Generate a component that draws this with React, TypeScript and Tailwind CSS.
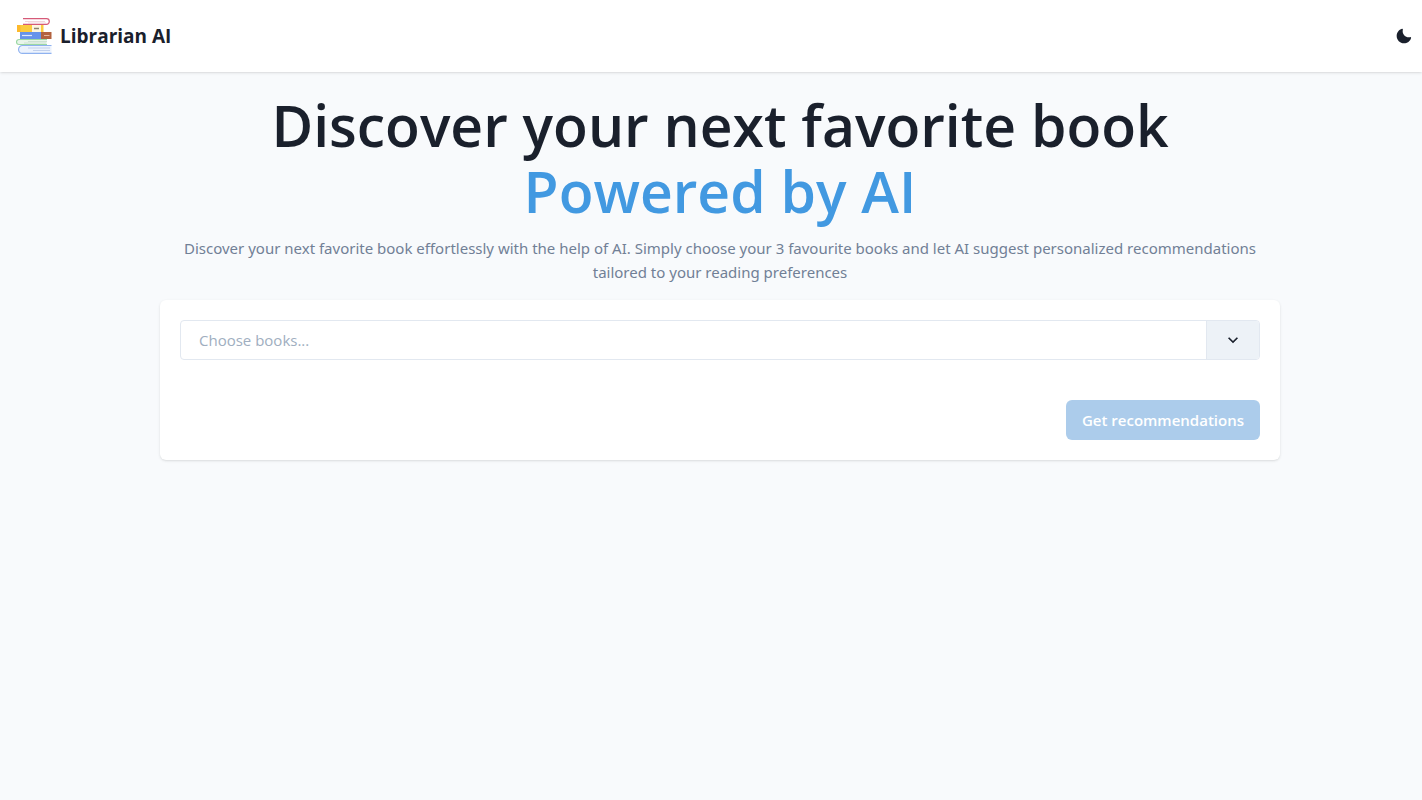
const BooksLogo = () => {
  return (
    <svg viewBox="0 0 36 36" className="w-9 h-9" fill="none" aria-hidden="true">
      <path d="M7 .7h23.500a2.800 2.800 0 0 1 0 5.600H7" fill="#fff" stroke="#d65a78" strokeWidth="1.200" />
      <path d="M9 3.500h20M12 5h18" stroke="#ecc3cc" strokeWidth=".7" />
      <path d="M1 7h26v7H1z" fill="#fbcb3f" />
      <path d="M1 7h3.500v7H1z" fill="#fdb92c" />
      <path d="M16 7h10v7H16z" fill="#fdf6df" />
      <path d="M25 7h2.500v7H25z" fill="#fbcb3f" />
      <path d="M18 10.500h5" stroke="#8b8270" strokeWidth="1.500" />
      <path d="M4 14h22v7H4z" fill="#6593ea" />
      <path d="M25 14h10.500v7H25z" fill="#b2623f" />
      <path d="M6 17.500h10" stroke="#dce8ff" strokeWidth="1.200" />
      <path d="M28 17.500h5.500" stroke="#e6b49c" strokeWidth="1" />
      <path d="M31 21.500H3a2.500 2.500 0 0 0 0 5h28" fill="#e9f5ea" stroke="#9bd8a4" strokeWidth="1.200" />
      <path d="M12 23.500h19M8 25h22" stroke="#c5dccb" strokeWidth=".8" />
      <path d="M35.500 27.500H6.500a3.900 3.900 0 0 0 0 7.900h29" fill="#edf3fd" stroke="#8fb2f0" strokeWidth="1.200" />
      <path d="M12 30h22M17 32.500h17" stroke="#b6c8e8" strokeWidth=".8" />
    </svg>
  );
};

const MoonIcon = () => {
  return (
    <svg viewBox="0 0 24 24" className="w-4 h-4" fill="currentColor" aria-hidden="true">
      <path d="M21.4,13.7C20.6,13.9,19.8,14,19,14c-5,0-9-4-9-9c0-0.8,0.1-1.6,0.3-2.4c0.1-0.3,0-0.7-0.3-1c-0.3-0.3-0.6-0.4-1-0.3C4.3,2.7,1,7.1,1,12c0,6.1,4.9,11,11,11c4.9,0,9.3-3.3,10.6-8.1c0.1-0.3,0-0.7-0.3-1C22.1,13.7,21.7,13.6,21.4,13.7z" />
    </svg>
  );
};

const ChevronIcon = () => {
  return (
    <svg viewBox="0 0 24 24" className="w-5 h-5" fill="currentColor" aria-hidden="true">
      <path d="M16.59 8.59L12 13.17 7.41 8.59 6 10l6 6 6-6z" />
    </svg>
  );
};

const Header = () => {
  return (
    <header className="flex items-center justify-between h-18 pl-4 pr-[10px] bg-white shadow-sm">
      <a href="#" className="flex items-center gap-2 text-[19px] font-bold">
        <BooksLogo />
        Librarian AI
      </a>
      <button type="button" aria-label="Toggle dark mode">
        <MoonIcon />
      </button>
    </header>
  );
};

const BookForm = () => {
  return (
    <form className="flex flex-col gap-10 p-5 bg-white rounded-md shadow-sm">
      <div className="flex h-10 border border-[#e2e8f0] rounded-sm overflow-hidden">
        <input
          type="text"
          aria-label="Choose books"
          placeholder="Choose books..."
          className="flex-1 min-w-0 pl-[18px] text-[15px] placeholder:text-[#a0aec0] outline-none"
        />
        <button
          type="button"
          aria-label="Show books"
          className="flex items-center justify-center w-[53px] bg-[#edf2f7] border-l border-[#e2e8f0]"
        >
          <ChevronIcon />
        </button>
      </div>
      <button
        type="submit"
        disabled
        className="self-end h-10 px-4 rounded-md bg-[#3182ce] text-[15px] font-semibold text-white opacity-40"
      >
        Get recommendations
      </button>
    </form>
  );
};

const App = () => {
  return (
    <div className="min-h-screen bg-[#f8fafc] text-[#1a202c] font-['Open_Sans','Noto_Sans',sans-serif]">
      <Header />
      <main className="pl-[18px] pt-5">
        <div className="flex flex-col gap-4 max-w-[1120px] mx-auto">
          <div className="flex flex-col gap-3 text-center">
            <h1 className="text-[57px] leading-[66px] font-semibold">
              Discover your next favorite book
              <br />
              <span className="text-[#4299e1]">Powered by AI</span>
            </h1>
            <p className="px-5 font-['Noto_Sans','Open_Sans',sans-serif] text-[15px] leading-6 text-[#718096]">
              Discover your next favorite book effortlessly with the help of AI. Simply choose your 3 favourite books
              and let AI suggest personalized recommendations tailored to your reading preferences
            </p>
          </div>
          <BookForm />
        </div>
      </main>
    </div>
  );
};

export default App;
